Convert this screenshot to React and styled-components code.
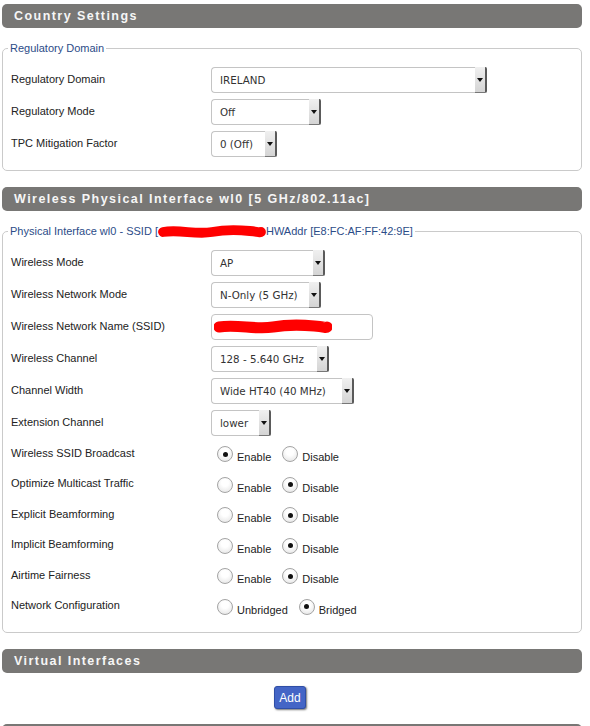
import React from 'react';
import styled, { createGlobalStyle } from 'styled-components';

const GlobalStyle = createGlobalStyle`
  body {
    margin: 0;
    background: #fff;
    font-family: 'Liberation Sans', Arial, sans-serif;
  }
`;

const Page = styled.div`
  width: 580px;
  padding: 4px 0 0 2px;
`;

const SectionBar = styled.h2`
  margin: 0;
  height: 24px;
  line-height: 24px;
  background: #787775;
  border-radius: 5px;
  color: #f6f6f6;
  font-family: 'Liberation Sans', Arial, sans-serif;
  font-size: 12.5px;
  font-weight: bold;
  letter-spacing: 1.45px;
  padding-left: 12px;
`;

const Fieldset = styled.fieldset`
  margin: 13px 0 16px;
  border: 1px solid #cacaca;
  border-radius: 5px;
  padding: ${p => p.$top || 12}px 8px 13px 8px;
  min-width: 0;
`;

const Legend = styled.legend`
  margin-left: -3px;
  padding: 0 2px;
  font-size: 11px;
  line-height: 14px;
  color: #2c4c88;
  white-space: nowrap;
`;

const Rows = styled.div`
  display: flex;
  flex-direction: column;
  gap: 6px;
`;

const Row = styled.div`
  display: grid;
  grid-template-columns: 200px auto;
  align-items: center;
  height: ${p => (p.$radio ? '24.5px' : '26px')};
`;

const Label = styled.span`
  font-size: 11px;
  color: #222;
  margin-top: -3px;
`;

const SelectBox = styled.div`
  box-sizing: border-box;
  width: ${p => p.$w}px;
  height: 26px;
  border: 1px solid #c4c4c4;
  border-right: none;
  border-radius: 4px 2px 2px 4px;
  display: flex;
  align-items: center;
  padding-left: 8px;
  font-family: 'DejaVu Sans', Verdana, sans-serif;
  font-size: 10.3px;
  color: #333;
  background: #fff;
`;

const SelectValue = styled.span`
  flex: 1;
  white-space: nowrap;
`;

const SelectArrow = styled.span`
  align-self: stretch;
  width: 10px;
  margin-top: -1px;
  margin-bottom: -1px;
  background: linear-gradient(#f0f0f0, #d4d4d4);
  border-right: 2px solid #5a5a5a;
  border-bottom: 1px solid #777;
  border-radius: 0 2px 2px 0;
  display: flex;
  align-items: center;
  justify-content: center;

  &::after {
    content: '';
    border-left: 3px solid transparent;
    border-right: 3px solid transparent;
    border-top: 4px solid #111;
  }
`;

const TextInput = styled.div`
  box-sizing: border-box;
  width: ${p => p.$w}px;
  height: 26px;
  border: 1px solid #c4c4c4;
  border-radius: 4px;
  display: flex;
  align-items: center;
  padding-left: 2px;
`;

const RadioGroup = styled.div`
  display: flex;
  align-items: center;
  padding-left: 6px;
`;

const Radio = styled.span`
  box-sizing: border-box;
  width: 16px;
  height: 16px;
  border-radius: 50%;
  border: 1px solid #a4a4a4;
  background: radial-gradient(circle at 50% 35%, #ffffff 30%, #e0e0e0 100%);
  display: flex;
  align-items: center;
  justify-content: center;

  &::after {
    content: '';
    width: 5px;
    height: 5px;
    border-radius: 50%;
    background: ${p => (p.$on ? '#111' : 'transparent')};
  }
`;

const RadioText = styled.span`
  font-size: 11px;
  color: #222;
  padding-top: 6px;
  margin: 0 11px 0 4px;
`;

const AddArea = styled.div`
  display: flex;
  justify-content: center;
  padding: 13px 4px 15px 0;
`;

const AddButton = styled.button`
  height: 23px;
  padding: 0 4px;
  background: #4465c6;
  border: 1px solid #2f4ea6;
  border-radius: 3px;
  box-shadow: 1px 1px 2px rgba(0, 0, 0, 0.55);
  color: #fff;
  font-family: 'Liberation Sans Narrow', 'Liberation Sans', Arial, sans-serif;
  font-size: 12px;
`;

const Scribble = ({ w, h }) => (
  <svg width={w} height={h} viewBox={`0 0 ${w} ${h}`} style={{ verticalAlign: 'middle' }}>
    <path
      d={`M5 ${h / 2} C ${w * 0.2} ${h / 2 - 3}, ${w * 0.35} ${h / 2 + 3}, ${w * 0.5} ${h / 2} S ${w * 0.75} ${h / 2 - 2}, ${w * 0.85} ${h / 2 - 1} S ${w - 6} ${h / 2 + 1}, ${w - 5} ${h / 2}`}
      stroke="#f00"
      strokeWidth={h * 0.7}
      strokeLinecap="round"
      fill="none"
    />
  </svg>
);

const Select = ({ w, children }) => (
  <SelectBox $w={w}>
    <SelectValue>{children}</SelectValue>
    <SelectArrow />
  </SelectBox>
);

const RadioRow = ({ label, options, value }) => (
  <Row $radio>
    <Label>{label}</Label>
    <RadioGroup>
      {options.map(o => (
        <React.Fragment key={o}>
          <Radio $on={o === value} />
          <RadioText>{o}</RadioText>
        </React.Fragment>
      ))}
    </RadioGroup>
  </Row>
);

const ED = ['Enable', 'Disable'];

export default function App() {
  return (
    <Page>
      <GlobalStyle />
      <SectionBar>Country Settings</SectionBar>
      <Fieldset>
        <Legend>Regulatory Domain</Legend>
        <Rows>
          <Row>
            <Label>Regulatory Domain</Label>
            <Select w={276}>IRELAND</Select>
          </Row>
          <Row>
            <Label>Regulatory Mode</Label>
            <Select w={110}>Off</Select>
          </Row>
          <Row>
            <Label>TPC Mitigation Factor</Label>
            <Select w={66}>0 (Off)</Select>
          </Row>
        </Rows>
      </Fieldset>

      <SectionBar>Wireless Physical Interface wl0 [5 GHz/802.11ac]</SectionBar>
      <Fieldset $top={11}>
        <Legend>
          Physical Interface wl0 - SSID [<Scribble w={108} h={14} />HWAddr [E8:FC:AF:FF:42:9E]
        </Legend>
        <Rows>
          <Row>
            <Label>Wireless Mode</Label>
            <Select w={114}>AP</Select>
          </Row>
          <Row>
            <Label>Wireless Network Mode</Label>
            <Select w={110}>N-Only (5 GHz)</Select>
          </Row>
          <Row>
            <Label>Wireless Network Name (SSID)</Label>
            <TextInput $w={162}>
              <Scribble w={118} h={16} />
            </TextInput>
          </Row>
          <Row>
            <Label>Wireless Channel</Label>
            <Select w={118}>128 - 5.640 GHz</Select>
          </Row>
          <Row>
            <Label>Channel Width</Label>
            <Select w={143}>Wide HT40 (40 MHz)</Select>
          </Row>
          <Row>
            <Label>Extension Channel</Label>
            <Select w={60}>lower</Select>
          </Row>
          <RadioRow label="Wireless SSID Broadcast" options={ED} value="Enable" />
          <RadioRow label="Optimize Multicast Traffic" options={ED} value="Disable" />
          <RadioRow label="Explicit Beamforming" options={ED} value="Disable" />
          <RadioRow label="Implicit Beamforming" options={ED} value="Disable" />
          <RadioRow label="Airtime Fairness" options={ED} value="Disable" />
          <RadioRow label="Network Configuration" options={['Unbridged', 'Bridged']} value="Bridged" />
        </Rows>
      </Fieldset>

      <SectionBar>Virtual Interfaces</SectionBar>
      <AddArea>
        <AddButton>Add</AddButton>
      </AddArea>
      <SectionBar />
    </Page>
  );
}
